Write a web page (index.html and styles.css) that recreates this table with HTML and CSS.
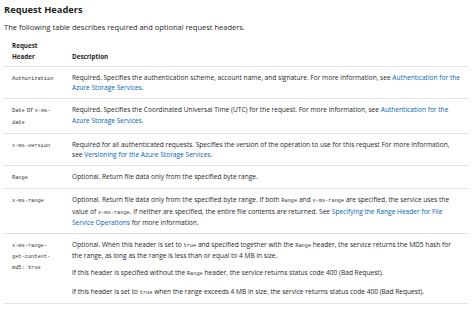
FILE: index.html
```html
<!DOCTYPE html>
<html lang="en">

<head>
    <meta charset="UTF-8">
    <meta name="viewport" content="width=device-width, initial-scale=1.0">
    <title>Request Headers</title>
    <link rel="stylesheet" href="styles.css">
</head>

<body>
    <h2 class="title">Request Headers</h2>
    <p class="intro">The following table describes required and optional request headers.</p>

    <table class="headers-table">
        <thead>
            <tr>
                <th class="col-name">Request Header</th>
                <th>Description</th>
            </tr>
        </thead>
        <tbody>
            <tr>
                <td><code>Authorization</code></td>
                <td>Required. Specifies the authentication scheme, account name, and signature. For more information, see <a href="#">Authentication for the Azure Storage Services</a>.</td>
            </tr>
            <tr>
                <td><code>Date</code> or <code>x-ms-date</code></td>
                <td>Required. Specifies the Coordinated Universal Time (UTC) for the request. For more information, see <a href="#">Authentication for the Azure Storage Services</a>.</td>
            </tr>
            <tr>
                <td><code>x-ms-version</code></td>
                <td>Required for all authenticated requests. Specifies the version of the operation to use for this request For more information, see <a href="#">Versioning for the Azure Storage Services</a>.</td>
            </tr>
            <tr>
                <td><code>Range</code></td>
                <td>Optional. Return file data only from the specified byte range.</td>
            </tr>
            <tr>
                <td><code>x-ms-range</code></td>
                <td>Optional. Return file data only from the specified byte range. If both <code>Range</code> and <code>x-ms-range</code> are specified, the service uses the value of <code>x-ms-range</code>. If neither are specified, the entire file contents are returned. See <a href="#">Specifying the Range Header for File Service Operations</a> for more information.</td>
            </tr>
            <tr>
                <td><code>x-ms-range-get-content-md5: true</code></td>
                <td>
                    <p>Optional. When this header is set to <code>true</code> and specified together with the <code>Range</code> header, the service returns the MD5 hash for the range, as long as the range is less than or equal to 4 MB in size.</p>
                    <p>If this header is specified without the <code>Range</code> header, the service returns status code 400 (Bad Request).</p>
                    <p>If this header is set to <code>true</code> when the range exceeds 4 MB in size, the service returns status code 400 (Bad Request).</p>
                </td>
            </tr>
        </tbody>
    </table>
</body>

</html>
```

FILE: styles.css
```css
body {
    margin: 0;
    padding: 0 4px;
    background-color: #ffffff;
    color: #1f1f1f;
    font-family: 'Open Sans', 'Noto Sans', sans-serif;
}

.title {
    margin: 4px 0 0;
    font-size: 9.3px;
    line-height: 12px;
    font-weight: 700;
}

.intro {
    margin: 6px 0 0;
    font-size: 7.5px;
    line-height: 10px;
}

.headers-table {
    width: 464px;
    margin-top: 8px;
    border-collapse: collapse;
    font-size: 6.6px;
    line-height: 10.2px;
}

th {
    text-align: left;
    vertical-align: bottom;
    font-weight: 700;
    font-size: 6.3px;
    line-height: 11px;
    padding: 0 8px 4px;
}

.col-name {
    width: 44px;
}

td {
    vertical-align: top;
    padding: 6px 8px 5px;
    border-top: 1px solid #e3e3e3;
}

tbody tr:last-child td {
    border-bottom: 1px solid #e3e3e3;
}

td p {
    margin: 0 0 7px;
}

td p:last-child {
    margin-bottom: 0;
}

code {
    font-family: 'Liberation Mono', 'DejaVu Sans Mono', monospace;
    font-size: 5.3px;
    color: #333333;
}

a {
    color: #0065b3;
    text-decoration: none;
}
```
